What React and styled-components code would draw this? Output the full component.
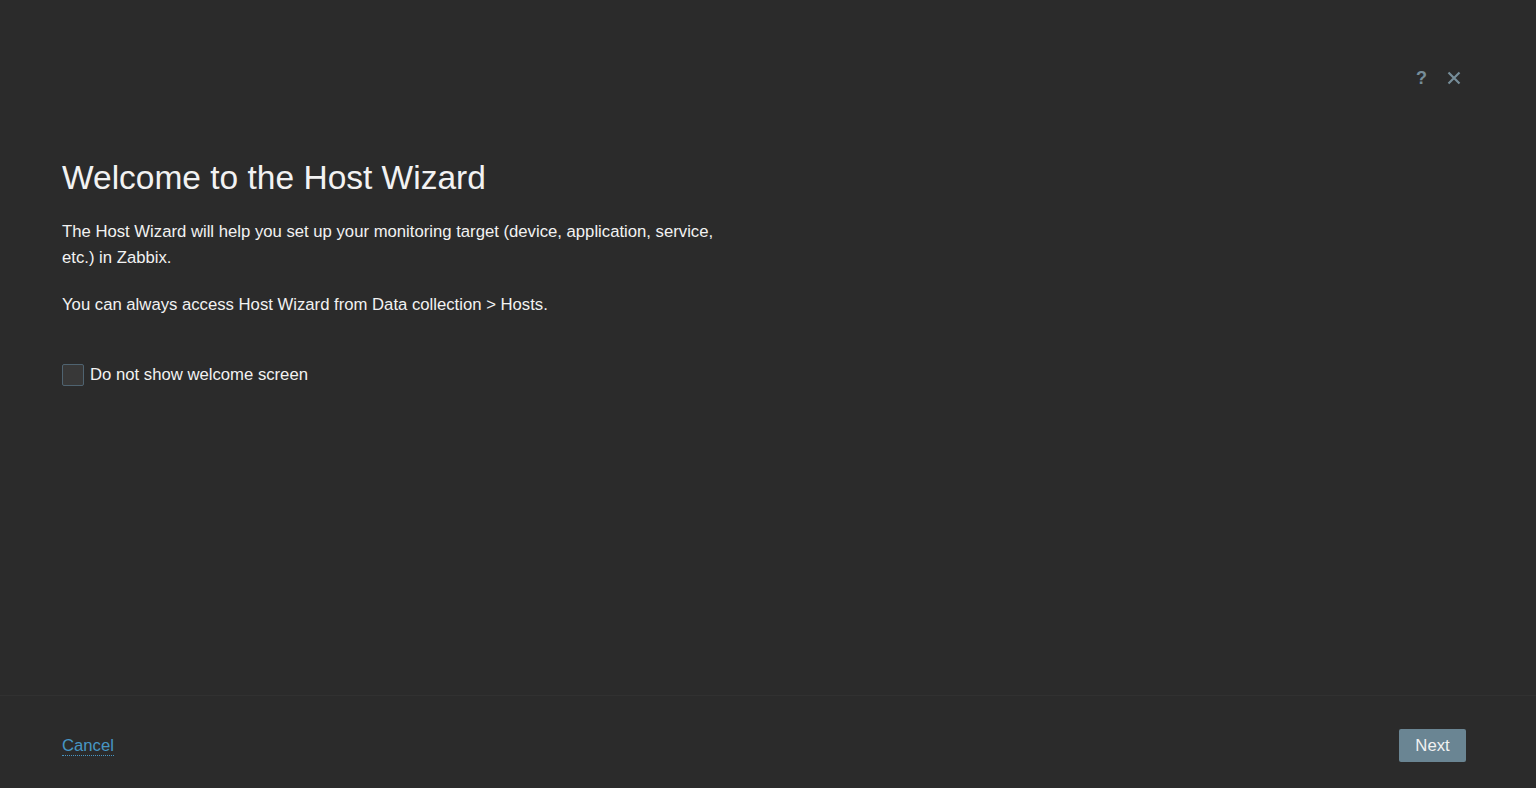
import React from "react";
import styled, { createGlobalStyle } from "styled-components";

const GlobalStyle = createGlobalStyle`
  html, body {
    margin: 0;
    padding: 0;
    background: #2b2b2b;
  }
  body {
    font-family: "Liberation Sans", Arial, sans-serif;
    color: #f2f2f2;
  }
`;

const Page = styled.div`
  height: 788px;
  display: flex;
  flex-direction: column;
  background: #2b2b2b;
`;

const Header = styled.div`
  display: flex;
  justify-content: flex-end;
  align-items: center;
  gap: 20px;
  padding: 68px 75px 0 0;
  height: 20px;
`;

const IconButton = styled.button`
  border: none;
  background: transparent;
  padding: 0;
  color: #768d99;
  cursor: pointer;
  display: flex;
  align-items: center;
  font-family: "Liberation Sans", Arial, sans-serif;
  font-weight: bold;
  font-size: 18px;
`;

const Body = styled.div`
  flex: 1;
  padding: 0 62px;
`;

const Title = styled.h1`
  margin: 70px 0 0;
  font-size: 33.5px;
  font-weight: 400;
  line-height: 40px;
  color: #f2f2f2;
`;

const Text = styled.p`
  margin: 21px 0 0;
  width: 670px;
  font-size: 16.7px;
  line-height: 26px;
  color: #f2f2f2;
`;

const CheckRow = styled.label`
  display: flex;
  align-items: center;
  gap: 6px;
  margin-top: 46px;
  font-size: 16.7px;
  color: #f2f2f2;
  cursor: pointer;
`;

const Box = styled.span`
  width: 20px;
  height: 20px;
  border: 1px solid #4f6370;
  border-radius: 2px;
  background: #383838;
`;

const Footer = styled.div`
  border-top: 1px solid #313131;
  height: 93px;
  box-sizing: border-box;
  padding: 7px 70px 0 62px;
  display: flex;
  align-items: center;
  justify-content: space-between;
`;

const CancelLink = styled.a`
  color: #4796c4;
  font-size: 16.7px;
  text-decoration: none;
  border-bottom: 1px dotted #4796c4;
  line-height: 19px;
  cursor: pointer;
`;

const NextButton = styled.button`
  width: 67px;
  height: 33px;
  border: none;
  border-radius: 2px;
  background: #6a8593;
  color: #f2f2f2;
  font-family: "Liberation Sans", Arial, sans-serif;
  font-size: 16.7px;
  cursor: pointer;
`;

const CloseIcon = () => (
  <svg width="14" height="14" viewBox="0 0 14 14">
    <path d="M1.5 1.5 L12.5 12.5 M12.5 1.5 L1.5 12.5" stroke="#768d99" strokeWidth="2.2" />
  </svg>
);

export default function App() {
  return (
    <Page>
      <GlobalStyle />
      <Header>
        <IconButton>?</IconButton>
        <IconButton>
          <CloseIcon />
        </IconButton>
      </Header>
      <Body>
        <Title>Welcome to the Host Wizard</Title>
        <Text>
          The Host Wizard will help you set up your monitoring target (device, application, service,
          etc.) in Zabbix.
        </Text>
        <Text>You can always access Host Wizard from Data collection &gt; Hosts.</Text>
        <CheckRow>
          <Box />
          Do not show welcome screen
        </CheckRow>
      </Body>
      <Footer>
        <CancelLink>Cancel</CancelLink>
        <NextButton>Next</NextButton>
      </Footer>
    </Page>
  );
}
